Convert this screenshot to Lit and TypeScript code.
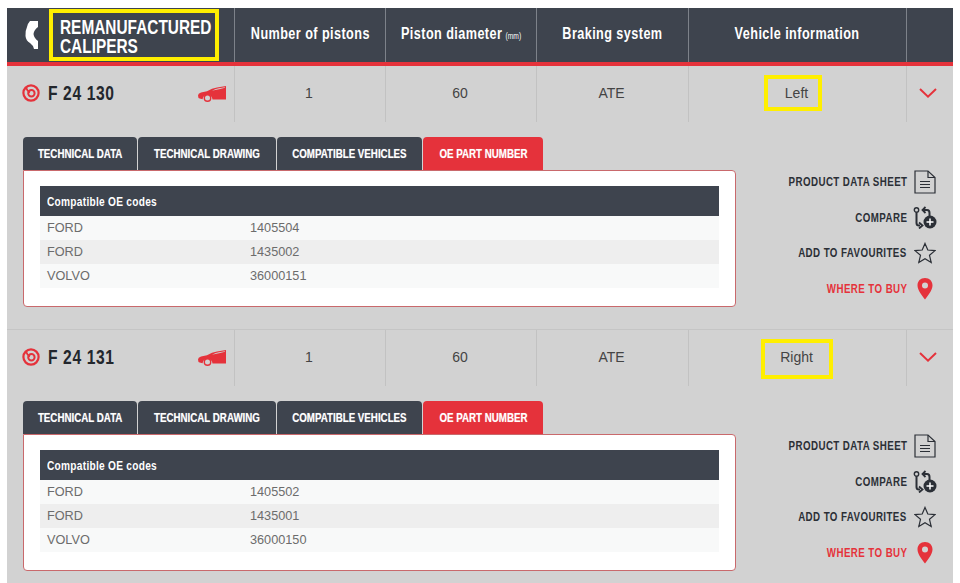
import { LitElement, html, css, svg } from "lit";
import { customElement } from "lit/decorators.js";

const products = [
  { code: "F 24 130", side: "Left", boxClass: "mark-left", oe: [["FORD", "1405504"], ["FORD", "1435002"], ["VOLVO", "36000151"]] },
  { code: "F 24 131", side: "Right", boxClass: "mark-right", oe: [["FORD", "1405502"], ["FORD", "1435001"], ["VOLVO", "36000150"]] },
];

const discIcon = html`<svg class="disc" width="18" height="18" viewBox="0 0 18 18" fill="none" stroke="#e5323b">
  <circle cx="9" cy="9" r="7.6" stroke-width="2.2"/>
  <circle cx="9.4" cy="9.2" r="3.2" stroke-width="2"/>
  <path d="M4 3.6 Q5 7 8 8.4" stroke-width="1.8"/>
</svg>`;

const carIcon = html`<svg width="28" height="16" viewBox="0 0 28 16">
  <path fill="#e5323b" d="M0 9.5 Q0 7.5 3 6.6 L9 5.2 Q14 2 19 1.4 L28 0 V13.5 H14.5 Q14 9 9.5 9 Q5.2 9 4.6 13.2 L1.6 12.6 Q0 12 0 9.5 Z"/>
  <path fill="#d2d2d2" d="M14 4.8 Q18 2.6 21 2.2 L27 1.2 V1.8 L21 3.2 Q17 4 14 4.8 Z"/>
  <circle cx="9.5" cy="12" r="3.2" fill="#d2d2d2" stroke="#e5323b" stroke-width="1.4"/>
</svg>`;

const chevron = html`<svg width="18" height="10" viewBox="0 0 18 10" fill="none" stroke="#e5323b" stroke-width="2"><path d="M1 1 L9 8.6 L17 1"/></svg>`;

const docIcon = html`<svg width="22" height="24" viewBox="0 0 22 24" fill="none" stroke="#2b2f36" stroke-width="1.2">
  <path d="M1 1 H14 L21 7.5 V23 H1 Z"/><path d="M14 1 V7.5 H21"/><path d="M6 11.5 H16 M6 14.5 H16 M6 17.5 H16"/>
</svg>`;

const compareIcon = html`<svg width="24" height="24" viewBox="0 0 24 24" fill="none" stroke="#2b2f36" stroke-width="2">
  <circle cx="3.5" cy="5" r="2.2" stroke-width="1.4"/>
  <path d="M3.5 7.5 V18 Q3.5 20.5 6 20.5 H7"/><path d="M6 17.5 L9.5 20.5 L6 23.5" stroke-width="1.8"/>
  <path d="M12.5 2 L9.5 5 L12.5 8" stroke-width="1.8"/><path d="M10.5 5 H14 Q16.5 5 16.5 8 V11"/>
  <circle cx="17" cy="17" r="6.5" fill="#2b2f36" stroke="none"/>
  <path d="M17 13.5 V20.5 M13.5 17 H20.5" stroke="#fff" stroke-width="1.5"/>
</svg>`;

const starIcon = html`<svg width="22" height="22" viewBox="0 0 22 22" fill="none" stroke="#2b2f36" stroke-width="1.2"><path d="M11 1.4 L13.8 8 L21 8.6 L15.5 13.3 L17.2 20.5 L11 16.7 L4.8 20.5 L6.5 13.3 L1 8.6 L8.2 8 Z"/></svg>`;

const pinIcon = html`<svg class="pin" width="16" height="22" viewBox="0 0 16 22"><path fill-rule="evenodd" fill="#e5323b" d="M8 0 C12.5 0 15.5 3.2 15.5 7.4 C15.5 12 11 17.5 8 21.5 C5 17.5 .5 12 .5 7.4 C.5 3.2 3.5 0 8 0 Z M8 4.6 A3 3 0 1 0 8 10.6 A3 3 0 1 0 8 4.6 Z"/></svg>`;

const caliperIcon = svg`<path fill="#fff" d="M5 0 H13 V6 Q9 9 8.5 13 Q9 17 13 20 V28 H9 Q8 24 5 22 Q1 20 .5 15 Q0 10 2 6 Q3 2 5 0 Z"/>`;

@customElement("app-root")
export class AppRoot extends LitElement {
  static styles = css`
    :host { display: block; width: 960px; height: 583px; overflow: hidden; background: #fff; font-family: "Liberation Sans", Arial, sans-serif; }
    .page { margin: 8px 7px 0; width: 946px; }
    .grid { display: grid; grid-template-columns: 228px 151px 151px 152px 218px 46px; }
    .head { height: 54px; background: #3e444e; border-bottom: 4px solid #e5323b; color: #fff; }
    .head > div { display: flex; align-items: center; justify-content: center; border-right: 1px solid #7d828a; font-weight: bold; font-size: 16px; letter-spacing: .55px; padding-bottom: 2px; white-space: nowrap; }
    .head > div:last-child { border-right: 0; }
    .label { display: inline-block; transform: scaleX(.79); }
    .head .brand { justify-content: flex-start; padding: 0 0 0 18px; gap: 22px; letter-spacing: 0; }
    .brand svg { flex: none; }
    .title { flex: none; width: 152px; position: relative; font-size: 20px; line-height: 19px; text-transform: uppercase; margin-top: 3px; }
    .title-text { display: block; transform: scaleX(.77); transform-origin: left center; white-space: nowrap; }
    .mm { font-size: 8.5px; font-weight: normal; margin-left: 4px; letter-spacing: 0; }
    .mark { position: absolute; border: 4px solid #ffef00; box-sizing: border-box; pointer-events: none; }
    .mark-title { left: -11px; top: -9px; width: 170px; height: 52px; }
    .mark-left { left: -21px; top: -10px; width: 58px; height: 36px; }
    .mark-right { left: -19px; top: -10px; width: 72px; height: 40px; }
    .product { background: #d2d2d2; border-bottom: 1px solid #c5c5c5; height: 263px; }
    .product:last-child { border-bottom: 0; height: 253px; }
    .cells { height: 56px; }
    .cells > div { display: flex; align-items: center; justify-content: center; border-right: 1px solid #c2c2c2; font-size: 14px; color: #444; padding: 0 2px 3px 0; }
    .cells > div:last-child { border-right: 0; padding-right: 4px; }
    .cells .code { justify-content: flex-start; padding: 0 0 3px 15px; gap: 8px; }
    .code strong { font-size: 20px; color: #23272d; letter-spacing: .8px; flex: 1; white-space: nowrap; margin-top: 1px; transform: scaleX(.78); transform-origin: left center; }
    .code svg:last-child { margin: 3px 8px 0 0; }
    .side { position: relative; }
    .detail { display: flex; padding: 15px 0 0 16px; }
    .content { width: 713px; }
    .tabs { display: flex; gap: 1px; height: 33px; }
    .tab { display: flex; align-items: center; justify-content: center; background: #3e444e; color: #fff; border-radius: 4px 4px 0 0; font-weight: bold; font-size: 12.5px; white-space: nowrap; text-shadow: 0 0 1px rgba(255, 255, 255, .45); }
    .tab span { transform: scaleX(.78); }
    .tab.on { background: #e5323b; }
    .panel { box-sizing: border-box; height: 137px; background: #fff; border: 1px solid #c9696c; border-radius: 0 4px 4px 4px; padding: 15px 16px; }
    .tbl-head { height: 30px; display: flex; align-items: center; padding-left: 7px; background: #3e444e; color: #fff; font-weight: bold; font-size: 13px; letter-spacing: .35px; white-space: nowrap; }
    .tbl-head span { transform: scaleX(.78); transform-origin: left center; }
    .tr { display: grid; grid-template-columns: 203px 1fr; align-items: center; height: 24px; padding: 0 0 1px 7px; box-sizing: border-box; font-size: 12.7px; color: #6c6c6c; background: #f8f9f9; }
    .tr:nth-child(odd) { background: #eeeeee; }
    .tr:nth-child(4) { background: #f8f9f9; }
    .actions { flex: 1; display: flex; flex-direction: column; align-items: flex-end; padding: 0 16px 0 0; margin-top: 27px; }
    .action { display: flex; align-items: center; justify-content: flex-end; height: 35.5px; font-weight: bold; font-size: 13px; letter-spacing: .55px; color: #2b2f36; white-space: nowrap; }
    .action span:first-child { transform: scaleX(.75); transform-origin: right center; }
    .action.buy { color: #e5323b; }
    .ico { width: 24px; margin-left: 6px; display: flex; justify-content: center; }
    .pin { margin-top: 2px; }
  `;

  renderProduct(p: (typeof products)[number]) {
    const tabs: [string, number][] = [["TECHNICAL DATA", 114], ["TECHNICAL DRAWING", 138], ["COMPATIBLE VEHICLES", 145], ["OE PART NUMBER", 120]];
    return html`<section class="product">
      <div class="grid cells">
        <div class="code">${discIcon}<strong>${p.code}</strong>${carIcon}</div>
        <div>1</div><div>60</div><div>ATE</div>
        <div><span class="side">${p.side}<span class="mark ${p.boxClass}"></span></span></div>
        <div>${chevron}</div>
      </div>
      <div class="detail">
        <div class="content">
          <div class="tabs">
            ${tabs.map(([t, w], i) => html`<div class="tab ${i === 3 ? "on" : ""}" style="width:${w}px"><span>${t}</span></div>`)}
          </div>
          <div class="panel">
            <div class="tbl-head"><span>Compatible OE codes</span></div>
            ${p.oe.map(([make, num]) => html`<div class="tr"><span>${make}</span><span>${num}</span></div>`)}
          </div>
        </div>
        <div class="actions">
          <div class="action"><span>PRODUCT DATA SHEET</span><span class="ico">${docIcon}</span></div>
          <div class="action"><span>COMPARE</span><span class="ico">${compareIcon}</span></div>
          <div class="action"><span>ADD TO FAVOURITES</span><span class="ico">${starIcon}</span></div>
          <div class="action buy"><span>WHERE TO BUY</span><span class="ico">${pinIcon}</span></div>
        </div>
      </div>
    </section>`;
  }

  render() {
    return html`<div class="page">
      <div class="grid head">
        <div class="brand">
          <svg width="13" height="28" viewBox="0 0 13 28">${caliperIcon}</svg>
          <span class="title"><span class="title-text">Remanufactured<br />Calipers</span><span class="mark mark-title"></span></span>
        </div>
        <div><span class="label">Number of pistons</span></div>
        <div><span class="label">Piston diameter<span class="mm">(mm)</span></span></div>
        <div><span class="label">Braking system</span></div>
        <div><span class="label">Vehicle information</span></div>
        <div></div>
      </div>
      ${products.map((p) => this.renderProduct(p))}
    </div>`;
  }
}
